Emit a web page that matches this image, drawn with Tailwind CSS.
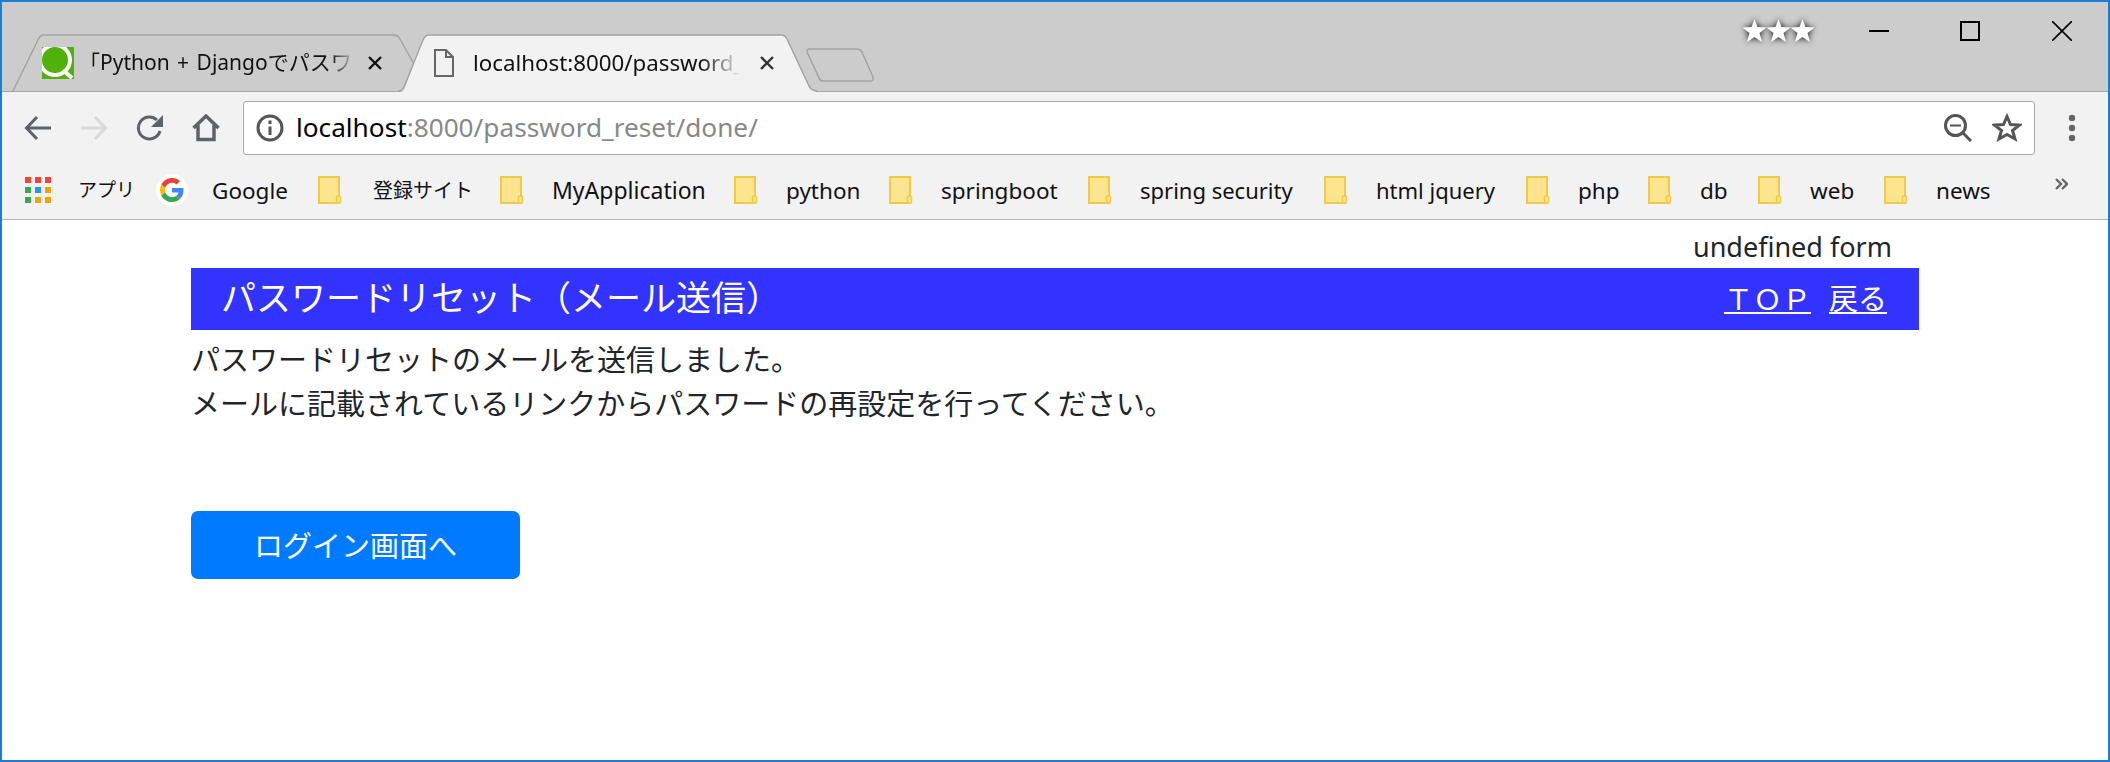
<!DOCTYPE html>
<html lang="ja">
  <head>
    <meta charset="UTF-8" />
    <script src="https://cdn.jsdelivr.net/npm/@tailwindcss/browser@4"></script>
    <title>localhost:8000/password_reset/done/</title>
  </head>
  <body class="bg-white">
    <div class="h-screen flex flex-col border-2 border-[#1a7ed2] overflow-hidden font-['Noto_Sans','Noto_Sans_CJK_JP',sans-serif] text-[#111]">
      <!-- tab strip -->
      <div class="relative h-[90px] shrink-0 flex bg-[#cccccc] border-b border-[#a8a8a8]">
        <svg class="absolute left-0 top-0" width="900" height="90" fill="none">
          <path d="M11 89 L36 38 Q38 33 42 33 L392 33 Q396 33 398 37 L412 62" stroke="#a3a3a3" stroke-width="1.5" />
          <path d="M398 90 Q401 90 403 86 L420 38 Q422 33 426 33 L779 33 Q783 33 785 37 L807 84 Q810 89 814 89 L814 90 Z" fill="#f2f2f2" />
          <path d="M396 89 Q400 89 402 85 L421 38 Q423 33 427 33 L779 33 Q783 33 785 37 L807 84 Q810 89 815 89" stroke="#a3a3a3" stroke-width="1.5" />
          <path d="M808 47 L855 47 Q858 47 860 50 L871 75 Q872 79 868 79 L821 79 Q818 79 817 76 L805 50 Q804 47 808 47 Z" stroke="#a3a3a3" stroke-width="1.5" />
        </svg>
        <div class="relative flex items-center h-[56px] mt-[33px] ml-[40px] w-[358px]">
          <svg width="32" height="32" viewBox="0 0 32 32" class="shrink-0">
            <rect width="32" height="32" fill="#4fb10a" />
            <circle cx="13" cy="13" r="17" fill="#fff" />
            <circle cx="13" cy="13" r="13" fill="#4fb10a" />
            <path d="M21 23 L30 31" stroke="#fff" stroke-width="4" />
          </svg>
          <span class="ml-[5px] mr-[10px] w-[279px] overflow-hidden whitespace-nowrap text-[21px] [word-spacing:2px] [mask-image:linear-gradient(to_right,black_90%,transparent_99%)]">「Python + Djangoでパスワードリセット</span>
          <svg width="14" height="14" viewBox="0 0 14 14" stroke="#111" stroke-width="2.4"><path d="M1 1 L13 13 M13 1 L1 13" /></svg>
        </div>
        <div class="relative flex items-center h-[56px] mt-[33px] ml-[34px] w-[350px]">
          <svg width="20" height="28" viewBox="0 0 20 28" fill="none" stroke="#666" stroke-width="2" class="shrink-0"><path d="M1 1 H12 L19 8 V27 H1 Z M12 1 V8 H19" /></svg>
          <span class="ml-[19px] w-[268px] overflow-hidden whitespace-nowrap text-[22.3px] [mask-image:linear-gradient(to_right,black_85%,transparent)]">localhost:8000/password_reset/done/</span>
          <svg width="14" height="14" viewBox="0 0 14 14" class="ml-[19px]" stroke="#333" stroke-width="2.4"><path d="M1 1 L13 13 M13 1 L1 13" /></svg>
        </div>
        <div class="ml-auto flex h-[60px] mr-[36px]">
          <svg width="74" height="26" viewBox="0 0 74 26" fill="#fff" class="mt-[16px] mr-[53px] drop-shadow-[0_0_3px_#111]">
            <polygon points="12.500,1 15.500,9 24.500,9.500 17.500,15 20,24 12.500,19 5,24 7.500,15 0.500,9.500 9.500,9" />
            <polygon points="36.500,1 39.500,9 48.500,9.500 41.500,15 44,24 36.500,19 29,24 31.500,15 24.500,9.500 33.500,9" />
            <polygon points="60.500,1 63.500,9 72.500,9.500 65.500,15 68,24 60.500,19 53,24 55.500,15 48.500,9.500 57.500,9" />
          </svg>
          <svg width="20" height="20" viewBox="0 0 20 20" class="mt-[19px] mr-[71px]" stroke="#000" stroke-width="2"><path d="M0 10 H20" /></svg>
          <svg width="20" height="20" viewBox="0 0 20 20" class="mt-[19px] mr-[72px]" fill="none" stroke="#000" stroke-width="2"><rect x="1" y="1" width="18" height="18" /></svg>
          <svg width="20" height="20" viewBox="0 0 20 20" class="mt-[19px]" stroke="#000" stroke-width="1.6"><path d="M0 0 L20 20 M20 0 L0 20" /></svg>
        </div>
      </div>

      <!-- toolbar -->
      <div class="h-[63px] shrink-0 flex items-center bg-[#f2f2f2] pt-[9px] pb-[1px]">
        <svg width="28" height="28" viewBox="0 0 28 28" fill="none" stroke="#5f6368" stroke-width="3" class="ml-[22px] shrink-0"><path d="M27 14 H3 M13 3 L2.5 14 L13 25" /></svg>
        <svg width="28" height="28" viewBox="0 0 28 28" fill="none" stroke="#d9d9d9" stroke-width="3" class="ml-[28px] shrink-0"><path d="M1 14 H25 M15 3 L25.5 14 L15 25" /></svg>
        <svg width="28" height="28" viewBox="0 0 28 28" fill="none" stroke="#5f6368" stroke-width="3" class="ml-[28px] shrink-0"><path d="M24 17 A11 11 0 1 1 21 6" /><path d="M27 1 V13 H15 Z" fill="#5f6368" stroke="none" /></svg>
        <svg width="28" height="28" viewBox="0 0 28 28" fill="none" stroke="#5f6368" stroke-width="3.500" class="ml-[28px] shrink-0"><path d="M1.500 14 L14 2 L26.500 14 M6 11 V25.500 H22 V11" /></svg>
        <div class="ml-[23px] w-[1792px] h-[54px] flex items-center bg-white border border-[#a9a9a9] rounded-[3px]">
          <svg width="28" height="28" viewBox="0 0 28 28" fill="none" stroke="#555" stroke-width="3" class="ml-[12px] shrink-0"><circle cx="14" cy="14" r="12" /><path d="M14 12.500 V21 M14 6.500 V10" /></svg>
          <span class="ml-[12px] text-[26.2px] text-[#888] whitespace-nowrap"><span class="text-black">localhost</span>:8000/password_reset/done/</span>
          <svg width="28" height="28" viewBox="0 0 28 28" fill="none" stroke="#555" stroke-width="3" class="ml-auto shrink-0"><circle cx="11.500" cy="11.500" r="10" /><path d="M18.500 18.500 L27 27" /><path d="M6 11.500 H17" stroke-width="2" /></svg>
          <svg width="30" height="30" viewBox="0 0 30 30" fill="none" stroke="#555" stroke-width="3" class="ml-[20px] mr-[12px] shrink-0"><polygon points="15,3.500 18.500,11.500 27.500,12 20.500,17.500 23,26 15,21.500 7,26 9.500,17.500 2.500,12 11.500,11.500" /></svg>
        </div>
        <svg width="8" height="28" viewBox="0 0 8 28" fill="#666" class="ml-[33px] shrink-0"><circle cx="4" cy="4" r="3.200" /><circle cx="4" cy="14" r="3.200" /><circle cx="4" cy="24" r="3.200" /></svg>
      </div>

      <!-- bookmarks bar -->
      <div class="h-[65px] shrink-0 flex items-center bg-[#f2f2f2] border-b border-[#b3b3b3] pt-[5px] text-[22.5px] whitespace-nowrap">
        <svg width="26" height="26" viewBox="0 0 26 26" class="ml-[23px] shrink-0">
          <rect x="0" y="0" width="6" height="6" fill="#f44336" /><rect x="10" y="0" width="6" height="6" fill="#f44336" /><rect x="20" y="0" width="6" height="6" fill="#f44336" />
          <rect x="0" y="10" width="6" height="6" fill="#34a853" /><rect x="10" y="10" width="6" height="6" fill="#2196f3" /><rect x="20" y="10" width="6" height="6" fill="#f4a400" />
          <rect x="0" y="20" width="6" height="6" fill="#34a853" /><rect x="10" y="20" width="6" height="6" fill="#f4a400" /><rect x="20" y="20" width="6" height="6" fill="#f4a400" />
        </svg>
        <span class="ml-[27px] w-[62px] pt-[1px] text-[19px]">アプリ</span>
        <svg width="32" height="32" viewBox="0 0 32 32" class="ml-[16px] shrink-0">
          <circle cx="16" cy="16" r="16" fill="#fff" />
          <svg x="4" y="4" width="24" height="24" viewBox="0 0 48 48">
            <path fill="#EA4335" d="M24 9.500c3.540 0 6.710 1.220 9.210 3.600l6.850-6.850C35.900 2.380 30.470 0 24 0 14.620 0 6.510 5.380 2.560 13.220l7.980 6.190C12.430 13.720 17.740 9.500 24 9.500z" />
            <path fill="#4285F4" d="M46.980 24.550c0-1.570-.15-3.090-.38-4.550H24v9.020h12.940c-.58 2.960-2.260 5.480-4.780 7.180l7.730 6c4.510-4.180 7.090-10.360 7.090-17.650z" />
            <path fill="#FBBC05" d="M10.530 28.590c-.5-1.450-.78-2.990-.78-4.590s.27-3.140.78-4.590l-7.980-6.190C.92 16.460 0 20.120 0 24c0 3.880.92 7.540 2.560 10.780l7.970-6.190z" />
            <path fill="#34A853" d="M24 48c6.480 0 11.930-2.130 15.890-5.810l-7.730-6c-2.150 1.450-4.920 2.300-8.160 2.300-6.260 0-11.570-4.220-13.470-9.910l-7.980 6.190C6.510 42.620 14.620 48 24 48z" />
          </svg>
        </svg>
        <span class="ml-[24px] w-[76px] pt-[2px]">Google</span>
        <div class="flex items-center ml-[30px] shrink-0">
          <svg width="24" height="28" viewBox="0 0 24 28" class="shrink-0"><path d="M1 1 H21 V27 H1 Z" fill="#fde48f" stroke="#f0c948" stroke-width="2" /><rect x="18.500" y="20" width="4" height="7" rx="1" fill="#fde48f" stroke="#f0c948" stroke-width="1.500" /></svg>
          <span class="ml-[31px] w-[97px] pt-[2px] text-[20px]">登録サイト</span>
        </div>
        <div class="flex items-center ml-[30px] shrink-0">
          <svg width="24" height="28" viewBox="0 0 24 28" class="shrink-0"><path d="M1 1 H21 V27 H1 Z" fill="#fde48f" stroke="#f0c948" stroke-width="2" /><rect x="18.500" y="20" width="4" height="7" rx="1" fill="#fde48f" stroke="#f0c948" stroke-width="1.500" /></svg>
          <span class="ml-[28px] w-[152px] pt-[2px] text-[23px]">MyApplication</span>
        </div>
        <div class="flex items-center ml-[30px] shrink-0">
          <svg width="24" height="28" viewBox="0 0 24 28" class="shrink-0"><path d="M1 1 H21 V27 H1 Z" fill="#fde48f" stroke="#f0c948" stroke-width="2" /><rect x="18.500" y="20" width="4" height="7" rx="1" fill="#fde48f" stroke="#f0c948" stroke-width="1.500" /></svg>
          <span class="ml-[28px] w-[73px] pt-[2px]">python</span>
        </div>
        <div class="flex items-center ml-[30px] shrink-0">
          <svg width="24" height="28" viewBox="0 0 24 28" class="shrink-0"><path d="M1 1 H21 V27 H1 Z" fill="#fde48f" stroke="#f0c948" stroke-width="2" /><rect x="18.500" y="20" width="4" height="7" rx="1" fill="#fde48f" stroke="#f0c948" stroke-width="1.500" /></svg>
          <span class="ml-[28px] w-[117px] pt-[2px]">springboot</span>
        </div>
        <div class="flex items-center ml-[30px] shrink-0">
          <svg width="24" height="28" viewBox="0 0 24 28" class="shrink-0"><path d="M1 1 H21 V27 H1 Z" fill="#fde48f" stroke="#f0c948" stroke-width="2" /><rect x="18.500" y="20" width="4" height="7" rx="1" fill="#fde48f" stroke="#f0c948" stroke-width="1.500" /></svg>
          <span class="ml-[28px] w-[154px] pt-[2px] text-[22px]">spring security</span>
        </div>
        <div class="flex items-center ml-[30px] shrink-0">
          <svg width="24" height="28" viewBox="0 0 24 28" class="shrink-0"><path d="M1 1 H21 V27 H1 Z" fill="#fde48f" stroke="#f0c948" stroke-width="2" /><rect x="18.500" y="20" width="4" height="7" rx="1" fill="#fde48f" stroke="#f0c948" stroke-width="1.500" /></svg>
          <span class="ml-[28px] w-[120px] pt-[2px] text-[22px]">html jquery</span>
        </div>
        <div class="flex items-center ml-[30px] shrink-0">
          <svg width="24" height="28" viewBox="0 0 24 28" class="shrink-0"><path d="M1 1 H21 V27 H1 Z" fill="#fde48f" stroke="#f0c948" stroke-width="2" /><rect x="18.500" y="20" width="4" height="7" rx="1" fill="#fde48f" stroke="#f0c948" stroke-width="1.500" /></svg>
          <span class="ml-[28px] w-[40px] pt-[2px]">php</span>
        </div>
        <div class="flex items-center ml-[30px] shrink-0">
          <svg width="24" height="28" viewBox="0 0 24 28" class="shrink-0"><path d="M1 1 H21 V27 H1 Z" fill="#fde48f" stroke="#f0c948" stroke-width="2" /><rect x="18.500" y="20" width="4" height="7" rx="1" fill="#fde48f" stroke="#f0c948" stroke-width="1.500" /></svg>
          <span class="ml-[28px] w-[28px] pt-[2px]">db</span>
        </div>
        <div class="flex items-center ml-[30px] shrink-0">
          <svg width="24" height="28" viewBox="0 0 24 28" class="shrink-0"><path d="M1 1 H21 V27 H1 Z" fill="#fde48f" stroke="#f0c948" stroke-width="2" /><rect x="18.500" y="20" width="4" height="7" rx="1" fill="#fde48f" stroke="#f0c948" stroke-width="1.500" /></svg>
          <span class="ml-[28px] w-[44px] pt-[2px]">web</span>
        </div>
        <div class="flex items-center ml-[30px] shrink-0">
          <svg width="24" height="28" viewBox="0 0 24 28" class="shrink-0"><path d="M1 1 H21 V27 H1 Z" fill="#fde48f" stroke="#f0c948" stroke-width="2" /><rect x="18.500" y="20" width="4" height="7" rx="1" fill="#fde48f" stroke="#f0c948" stroke-width="1.500" /></svg>
          <span class="ml-[28px] pt-[2px]">news</span>
        </div>
        <svg width="13" height="12" viewBox="0 0 13 12" fill="none" stroke="#666" stroke-width="2.400" class="ml-auto mr-[40px] mb-[11px] shrink-0"><path d="M1 1 L6 6 L1 11 M7 1 L12 6 L7 11" /></svg>
      </div>

      <!-- page -->
      <div class="flex-1 pl-[189px] pr-[189px] text-[29px] leading-[44px] text-[#212529]">
        <div class="flex justify-end h-[48px] pt-[5px] pr-[27px] text-[27px]">undefined form</div>
        <div class="h-[62px] flex items-center bg-[#3333ff] text-white pl-[30px] pr-[32px]">
          <span class="text-[35px] leading-[40px] pb-[2px]">パスワードリセット（メール送信）</span>
          <a href="#" class="ml-auto underline">ＴＯＰ</a>
          <a href="#" class="ml-[18px] underline">戻る</a>
        </div>
        <p class="mt-[8px]">パスワードリセットのメールを送信しました。</p>
        <p>メールに記載されているリンクからパスワードの再設定を行ってください。</p>
        <a href="#" class="mt-[85px] w-[329px] h-[68px] flex items-center justify-center rounded-[7px] bg-[#007bff] text-white pt-[2px]">ログイン画面へ</a>
      </div>
    </div>
  </body>
</html>
